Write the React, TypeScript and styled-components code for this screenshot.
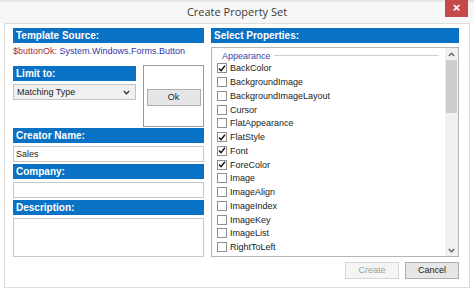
import styled, { createGlobalStyle } from "styled-components";

const GlobalStyle = createGlobalStyle`
  html, body {
    margin: 0;
    padding: 0;
    background: #ffffff;
    overflow: hidden;
  }
  * {
    box-sizing: border-box;
  }
`;

const properties: { name: string; checked: boolean }[] = [
  { name: "BackColor", checked: true },
  { name: "BackgroundImage", checked: false },
  { name: "BackgroundImageLayout", checked: false },
  { name: "Cursor", checked: false },
  { name: "FlatAppearance", checked: false },
  { name: "FlatStyle", checked: true },
  { name: "Font", checked: true },
  { name: "ForeColor", checked: true },
  { name: "Image", checked: false },
  { name: "ImageAlign", checked: false },
  { name: "ImageIndex", checked: false },
  { name: "ImageKey", checked: false },
  { name: "ImageList", checked: false },
  { name: "RightToLeft", checked: false },
  { name: "Size", checked: false },
];

const App = () => {
  return (
    <Window>
      <GlobalStyle />
      <TitleBar>
        <span />
        <Title>Create Property Set</Title>
        <CloseButton>×</CloseButton>
      </TitleBar>
      <Body>
        <LeftColumn>
          <Header>Template Source:</Header>
          <SourceLine>
            <Variable>$buttonOk</Variable>
            <Variable>: </Variable>
            <TypeName>System.Windows.Forms.Button</TypeName>
          </SourceLine>
          <LimitRow>
            <LimitPart>
              <Header>Limit to:</Header>
              <ComboBox>
                <span>Matching Type</span>
                <svg width="7" height="5" viewBox="0 0 7 5">
                  <path d="M0.8 1 L3.5 3.8 L6.2 1" fill="none" stroke="#333" strokeWidth="1.3" />
                </svg>
              </ComboBox>
            </LimitPart>
            <OkFrame>
              <DialogButton>Ok</DialogButton>
            </OkFrame>
          </LimitRow>
          <Header>Creator Name:</Header>
          <TextBox>Sales</TextBox>
          <Header>Company:</Header>
          <TextBox />
          <Header>Description:</Header>
          <TextArea />
        </LeftColumn>
        <RightColumn>
          <Header>Select Properties:</Header>
          <ListBox>
            <ListContent>
              <GroupLabel>
                <span>Appearance</span>
                <GroupLine />
              </GroupLabel>
              {properties.map((p) => (
                <Item key={p.name}>
                  <CheckBox>
                    {p.checked && (
                      <svg width="9" height="9" viewBox="0 0 9 9">
                        <path d="M1.2 4.6 L3.4 7 L7.8 1.4" fill="none" stroke="#111" strokeWidth="1.6" />
                      </svg>
                    )}
                  </CheckBox>
                  <ItemText>{p.name}</ItemText>
                </Item>
              ))}
            </ListContent>
            <ScrollBar>
              <ScrollArrow>
                <svg width="7" height="5" viewBox="0 0 7 5">
                  <path d="M0.8 4 L3.5 1.2 L6.2 4" fill="none" stroke="#606060" strokeWidth="1.3" />
                </svg>
              </ScrollArrow>
              <Track>
                <Thumb />
              </Track>
              <ScrollArrow>
                <svg width="7" height="5" viewBox="0 0 7 5">
                  <path d="M0.8 1 L3.5 3.8 L6.2 1" fill="none" stroke="#606060" strokeWidth="1.3" />
                </svg>
              </ScrollArrow>
            </ScrollBar>
          </ListBox>
          <ButtonRow>
            <DialogButton $disabled>Create</DialogButton>
            <DialogButton>Cancel</DialogButton>
          </ButtonRow>
        </RightColumn>
      </Body>
    </Window>
  );
};

export default App;

const Window = styled.div`
  width: 474px;
  height: 293px;
  display: flex;
  flex-direction: column;
  font-family: "Liberation Sans", Arial, sans-serif;
`;

const TitleBar = styled.div`
  height: 23px;
  display: grid;
  grid-template-columns: 1fr auto 1fr;
  background: linear-gradient(#e4e4e4 0 2px, #f7f7f7 2px);
`;

const Title = styled.span`
  font-family: "Open Sans", "Liberation Sans", sans-serif;
  font-size: 11px;
  color: #3a3a3a;
  line-height: 24px;
`;

const CloseButton = styled.div`
  justify-self: end;
  width: 23px;
  height: 17px;
  margin-right: 6px;
  background: #c7484b;
  color: #ffffff;
  font-size: 13px;
  line-height: 16px;
  text-align: center;
  font-weight: bold;
`;

const Body = styled.div`
  height: 265px;
  margin: 0 4px;
  border: 1px solid #dcdcdc;
  background: #ffffff;
  padding: 4px 10px 0 8px;
  display: grid;
  grid-template-columns: 191px 248px;
  column-gap: 7px;
  align-items: start;
`;

const LeftColumn = styled.div`
  display: flex;
  flex-direction: column;
`;

const RightColumn = styled.div`
  display: flex;
  flex-direction: column;
`;

const Header = styled.div`
  height: 15px;
  background: #0a72c4;
  color: #ffffff;
  font-weight: bold;
  font-size: 10px;
  line-height: 15px;
  padding-left: 3px;
`;

const SourceLine = styled.div`
  height: 22px;
  font-size: 9px;
  line-height: 17px;
`;

const Variable = styled.span`
  color: #a52a3a;
`;

const TypeName = styled.span`
  color: #3535a8;
`;

const LimitRow = styled.div`
  display: flex;
  justify-content: space-between;
  margin-bottom: 1px;
`;

const LimitPart = styled.div`
  width: 123px;
  margin-top: 1px;
  display: flex;
  flex-direction: column;
  gap: 3px;
`;

const ComboBox = styled.div`
  height: 16px;
  border: 1px solid #c4c4c4;
  background: #f0f0f0;
  display: flex;
  align-items: center;
  justify-content: space-between;
  padding: 0 5px 0 3px;
  font-size: 9px;
  color: #222;
`;

const OkFrame = styled.div`
  width: 61px;
  height: 62px;
  border: 1px solid #9a9a9a;
  display: flex;
  align-items: center;
  justify-content: center;
  padding-top: 2px;
`;

const DialogButton = styled.div<{ $disabled?: boolean }>`
  width: 54px;
  height: 17px;
  border: 1px solid ${(p) => (p.$disabled ? "#d5d5d5" : "#adadad")};
  background: ${(p) => (p.$disabled ? "#f4f4f4" : "#e6e6e6")};
  color: ${(p) => (p.$disabled ? "#9d9d9d" : "#222")};
  font-size: 9px;
  line-height: 15px;
  text-align: center;
`;

const TextBox = styled.div`
  height: 16px;
  margin: 3px 0 2px;
  border: 1px solid #c8c8c8;
  font-size: 9px;
  line-height: 14px;
  padding-left: 2px;
  color: #222;
`;

const TextArea = styled.div`
  height: 39px;
  margin-top: 3px;
  border: 1px solid #c8c8c8;
`;

const ListBox = styled.div`
  height: 210px;
  margin-top: 4px;
  border: 1px solid #b5b5b5;
  display: flex;
  overflow: hidden;
`;

const ListContent = styled.div`
  flex: 1;
  overflow: hidden;
  padding: 2px 0 0 5px;
`;

const GroupLabel = styled.div`
  height: 11.5px;
  display: flex;
  align-items: center;
  gap: 3px;
  padding: 0 6px 0 5px;
  font-size: 9px;
  color: #3b48a6;
`;

const GroupLine = styled.div`
  flex: 1;
  height: 1px;
  background: #cfcfcf;
`;

const Item = styled.div`
  height: 13.75px;
  display: flex;
  align-items: center;
  gap: 3px;
`;

const CheckBox = styled.div`
  width: 10px;
  height: 10px;
  border: 1px solid #8f8f8f;
  background: #fff;
  display: flex;
  align-items: center;
  justify-content: center;
`;

const ItemText = styled.span`
  font-size: 9px;
  color: #222;
`;

const ScrollBar = styled.div`
  width: 13px;
  display: flex;
  flex-direction: column;
  background: #f0f0f0;
`;

const ScrollArrow = styled.div`
  height: 12px;
  display: flex;
  align-items: center;
  justify-content: center;
`;

const Track = styled.div`
  flex: 1;
`;

const Thumb = styled.div`
  height: 53px;
  margin: 0 1px;
  background: #cdcdcd;
`;

const ButtonRow = styled.div`
  display: flex;
  justify-content: flex-end;
  gap: 6px;
  margin-top: 5px;
`;
